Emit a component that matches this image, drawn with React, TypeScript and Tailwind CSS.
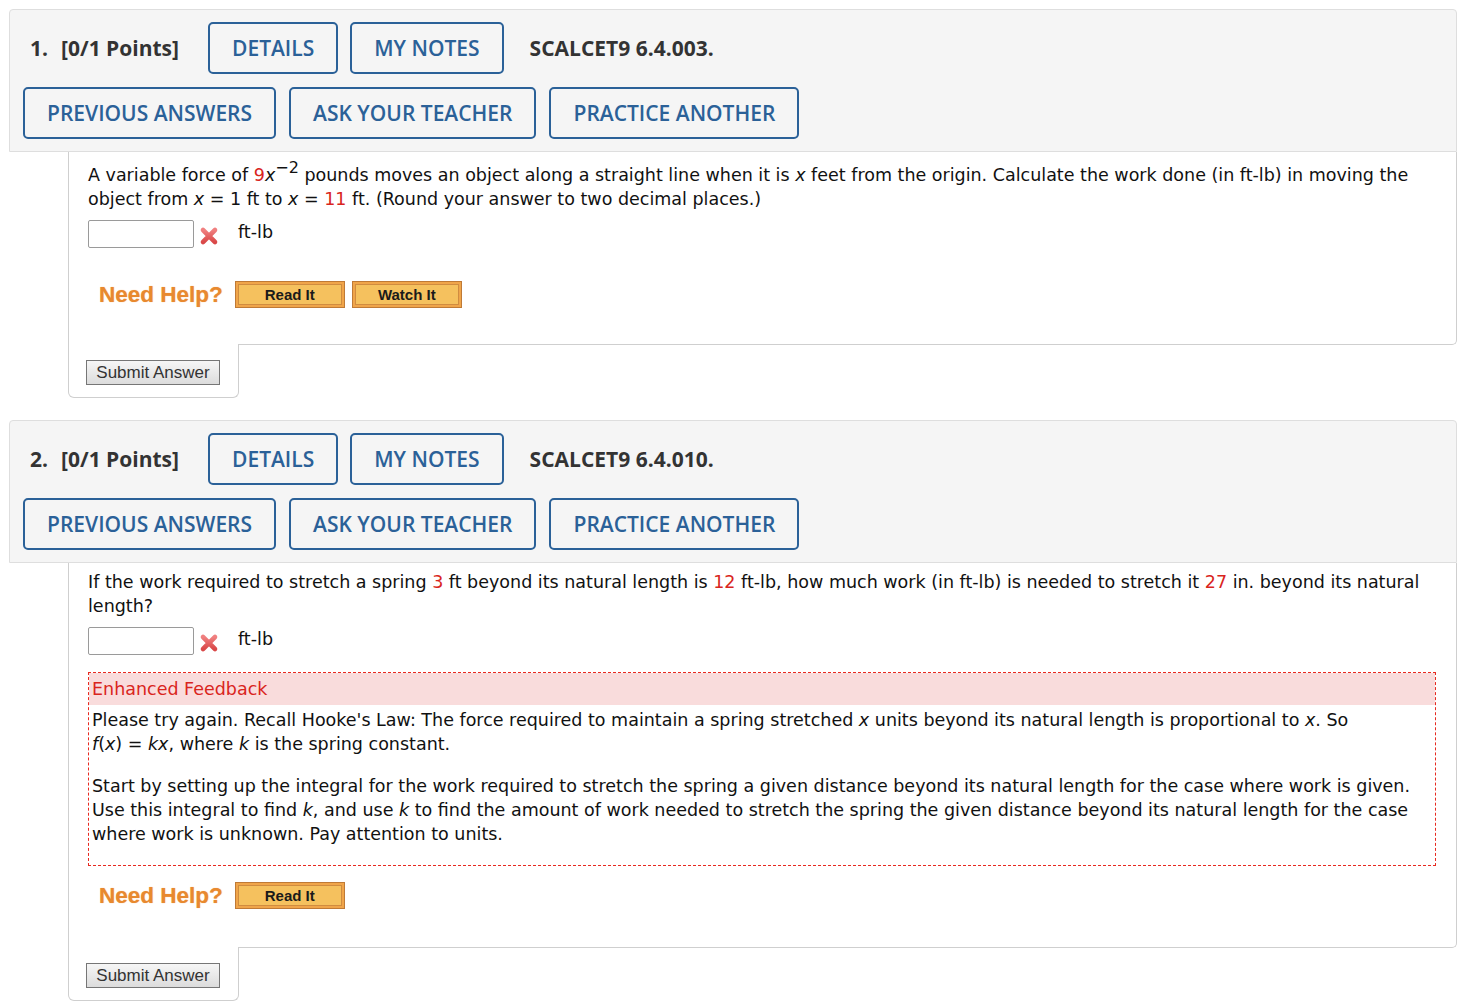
import React from 'react'

const blue = 'border-[#2b6198] text-[#2b6198]'

function HeaderButton({ label }: { label: string }) {
  return (
    <button
      className={`h-[52px] rounded-[5px] border-2 ${blue} bg-transparent px-[22px] text-[21px] font-semibold [font-family:'Open_Sans',sans-serif]`}
    >
      {label}
    </button>
  )
}

function Header({ num, code }: { num: string; code: string }) {
  return (
    <div className="rounded-t-[4px] border border-[#dedede] bg-[#f5f5f5] px-[13px] pt-[12px] pb-[12px] [font-family:'Open_Sans',sans-serif]">
      <div className="flex items-center">
        <h2 className="ml-[7px] mr-[29px] text-[21px] font-bold text-[#333]">
          {num}
          <span className="ml-[13px]">[0/1 Points]</span>
        </h2>
        <div className="flex gap-[12px]">
          <HeaderButton label="DETAILS" />
          <HeaderButton label="MY NOTES" />
        </div>
        <span className="ml-[26px] text-[21px] font-bold text-[#333]">{code}</span>
      </div>
      <div className="mt-[13px] flex gap-[13px]">
        <HeaderButton label="PREVIOUS ANSWERS" />
        <HeaderButton label="ASK YOUR TEACHER" />
        <HeaderButton label="PRACTICE ANOTHER" />
      </div>
    </div>
  )
}

function RedX() {
  return (
    <svg width="20" height="20" viewBox="0 0 20 20" className="mt-[6px]">
      <defs>
        <linearGradient id="xg" x1="0" y1="0" x2="0" y2="1">
          <stop offset="0" stopColor="#f08080" />
          <stop offset="1" stopColor="#d94848" />
        </linearGradient>
      </defs>
      <path d="M4 4 L16 16 M16 4 L4 16" stroke="url(#xg)" strokeWidth="4.6" strokeLinecap="round" />
    </svg>
  )
}

function AnswerRow() {
  return (
    <div className="mt-[9px] flex items-start">
      <input
        type="text"
        className="h-[28px] w-[106px] rounded-[2px] border border-[#9a9a9a] bg-white"
      />
      <span className="ml-[5px]">
        <RedX />
      </span>
      <span className="ml-[19px] leading-[24px]">ft-lb</span>
    </div>
  )
}

function HelpButton({ label }: { label: string }) {
  return (
    <button className="h-[27px] w-[110px] border border-[#bf7a36] bg-[#f0a54a] p-[2px]">
      <span className="flex h-full items-center justify-center border border-[#d08c40] bg-[#f5c15e] text-[15px] font-bold text-[#1a1a1a] [font-family:'Liberation_Sans',Arial,sans-serif]">
        {label}
      </span>
    </button>
  )
}

function NeedHelp({ watch }: { watch?: boolean }) {
  return (
    <div className="flex items-center">
      <span className="ml-[11px] mr-[12px] text-[22.5px] font-bold text-[#e8892f] [font-family:'Liberation_Sans',Arial,sans-serif] [text-shadow:0_0_1px_#f3b070]">
        Need Help?
      </span>
      <div className="flex gap-[7px]">
        <HelpButton label="Read It" />
        {watch && <HelpButton label="Watch It" />}
      </div>
    </div>
  )
}

function SubmitTab() {
  return (
    <div className="relative -mt-px h-[54px] w-[171px] rounded-b-[6px] border-x border-b border-[#cfcfcf] bg-white pt-[16px] pl-[17px]">
      <button className="h-[25px] w-[134px] border border-[#767676] bg-gradient-to-b from-[#f6f6f6] to-[#dcdcdc] text-[17px] text-[#333] [font-family:'Liberation_Sans',Arial,sans-serif]">
        Submit Answer
      </button>
    </div>
  )
}

const red = 'text-[#d9251d]'

export default function App() {
  return (
    <div className="min-h-screen bg-white pt-[9px] pr-[17px] pb-[9px] pl-[9px] text-[17.5px] leading-[24px] text-[#111] [font-family:'DejaVu_Sans',Verdana,sans-serif]">
      {/* question 1 */}
      <section>
        <Header num="1." code="SCALCET9 6.4.003." />
        <div className="ml-[59px]">
          <div className="rounded-br-[5px] border-x border-b border-[#cfcfcf] pt-[11px] pr-[20px] pb-[36px] pl-[19px]">
            <p>
              A variable force of <span className={red}>9</span>
              <i>x</i>
              <sup className="text-[16px]">−2</sup> pounds moves an object along a straight line when it is <i>x</i>{' '}
              feet from the origin. Calculate the work done (in ft-lb) in moving the object from <i>x</i> = 1 ft to{' '}
              <i>x</i> = <span className={red}>11</span> ft. (Round your answer to two decimal places.)
            </p>
            <AnswerRow />
            <div className="mt-[33px]">
              <NeedHelp watch />
            </div>
          </div>
          <SubmitTab />
        </div>
      </section>

      {/* question 2 */}
      <section className="mt-[22px]">
        <Header num="2." code="SCALCET9 6.4.010." />
        <div className="ml-[59px]">
          <div className="rounded-br-[5px] border-x border-b border-[#cfcfcf] pt-[7px] pr-[20px] pb-[38px] pl-[19px]">
            <p>
              If the work required to stretch a spring <span className={red}>3</span> ft beyond its natural length is{' '}
              <span className={red}>12</span> ft-lb, how much work (in ft-lb) is needed to stretch it{' '}
              <span className={red}>27</span> in. beyond its natural length?
            </p>
            <AnswerRow />
            <div className="mt-[17px] border border-dashed border-[#e8291f] pb-[19px]">
              <div className="bg-[#f9dcdc] px-[3px] py-[4px] text-[#d9251d]">Enhanced Feedback</div>
              <div className="px-[3px]">
                <p className="mt-[3px]">
                  Please try again. Recall Hooke's Law: The force required to maintain a spring stretched <i>x</i>{' '}
                  units beyond its natural length is proportional to <i>x</i>. So{' '}
                  <span className="whitespace-nowrap">
                    <i>f</i>(<i>x</i>) = <i>kx</i>,
                  </span>{' '}
                  where <i>k</i> is the spring constant.
                </p>
                <p className="mt-[18px]">
                  Start by setting up the integral for the work required to stretch the spring a given distance beyond
                  its natural length for the case where work is given. Use this integral to find <i>k</i>, and use{' '}
                  <i>k</i> to find the amount of work needed to stretch the spring the given distance beyond its
                  natural length for the case where work is unknown. Pay attention to units.
                </p>
              </div>
            </div>
            <div className="mt-[16px]">
              <NeedHelp />
            </div>
          </div>
          <SubmitTab />
        </div>
      </section>
    </div>
  )
}
